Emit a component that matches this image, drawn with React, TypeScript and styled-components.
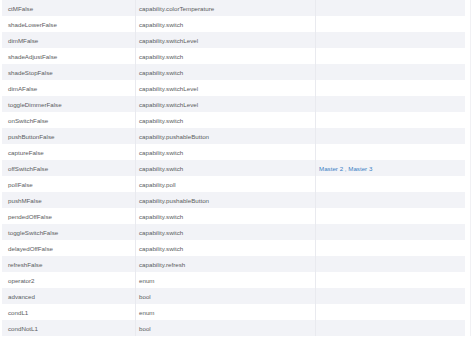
import styled, { createGlobalStyle } from 'styled-components';

const rows = [
  { name: 'ctMFalse', type: 'capability.colorTemperature' },
  { name: 'shadeLowerFalse', type: 'capability.switch' },
  { name: 'dimMFalse', type: 'capability.switchLevel' },
  { name: 'shadeAdjustFalse', type: 'capability.switch' },
  { name: 'shadeStopFalse', type: 'capability.switch' },
  { name: 'dimAFalse', type: 'capability.switchLevel' },
  { name: 'toggleDimmerFalse', type: 'capability.switchLevel' },
  { name: 'onSwitchFalse', type: 'capability.switch' },
  { name: 'pushButtonFalse', type: 'capability.pushableButton' },
  { name: 'captureFalse', type: 'capability.switch' },
  { name: 'offSwitchFalse', type: 'capability.switch', links: ['Master 2', 'Master 3'] },
  { name: 'pollFalse', type: 'capability.poll' },
  { name: 'pushMFalse', type: 'capability.pushableButton' },
  { name: 'pendedOffFalse', type: 'capability.switch' },
  { name: 'toggleSwitchFalse', type: 'capability.switch' },
  { name: 'delayedOffFalse', type: 'capability.switch' },
  { name: 'refreshFalse', type: 'capability.refresh' },
  { name: 'operator2', type: 'enum' },
  { name: 'advanced', type: 'bool' },
  { name: 'condL1', type: 'enum' },
  { name: 'condNotL1', type: 'bool' },
];

const GlobalStyle = createGlobalStyle`
  body {
    margin: 0;
    background: #fff;
    font-family: "Liberation Sans", Arial, sans-serif;
  }
`;

function App() {
  return (
    <>
      <GlobalStyle />
      <Page>
        <Table>
          {rows.map((r, i) => (
            <Row key={r.name} striped={i % 2 === 0}>
              <Cell>{r.name}</Cell>
              <Cell divided>{r.type}</Cell>
              <Cell divided>
                {r.links &&
                  r.links.map((l, j) => (
                    <span key={l}>
                      {j > 0 && <Sep> , </Sep>}
                      <LinkText href="#">{l}</LinkText>
                    </span>
                  ))}
              </Cell>
            </Row>
          ))}
        </Table>
      </Page>
    </>
  );
}

const Page = styled.div`
  display: flex;
  width: 468px;
  padding-left: 2px;
  border-right: 1px solid #f1f1f4;
`;

const Table = styled.div`
  display: flex;
  flex-direction: column;
  width: 463px;
`;

const Row = styled.div<{ striped: boolean }>`
  display: grid;
  grid-template-columns: 133px 180px 150px;
  height: 16px;
  background: ${(p) => (p.striped ? '#f2f3f7' : '#fff')};
`;

const Cell = styled.div<{ divided?: boolean }>`
  display: flex;
  align-items: center;
  padding-left: ${(p) => (p.divided ? '3px' : '6px')};
  font-size: 6.2px;
  color: #5a5b60;
  white-space: nowrap;
  border-left: ${(p) => (p.divided ? '1px solid #e9eaef' : 'none')};
`;

const LinkText = styled.a`
  color: #3a7fc4;
  text-decoration: none;
`;

const Sep = styled.span`
  color: #3a7fc4;
  white-space: pre;
`;

export default App;
